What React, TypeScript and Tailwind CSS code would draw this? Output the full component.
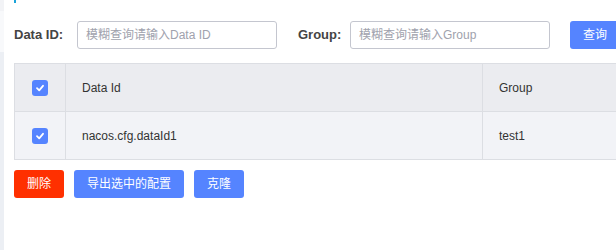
import React from "react";

const font = { fontFamily: '"Liberation Sans", Arial, "Noto Sans CJK SC", sans-serif' };

function Check() {
  return (
    <span className="inline-flex h-[16px] w-[16px] items-center justify-center rounded-[3px] bg-[#5584ff]">
      <svg width="10" height="10" viewBox="0 0 10 10" fill="none">
        <path d="M2 5.2 L4.2 7.3 L8 2.8" stroke="white" strokeWidth="1.8" strokeLinecap="round" strokeLinejoin="round" />
      </svg>
    </span>
  );
}

export default function App() {
  return (
    <div className="flex h-[250px] w-[616px] overflow-hidden bg-white" style={font}>
      <div className="flex w-[4px] shrink-0 flex-col">
        <div className="h-[11px] bg-[#f2f3f6]" />
        <div className="h-[41px] bg-[#f8f9fb]" />
        <div className="flex-1 bg-[#eceff4]" />
      </div>
      <div className="min-w-0 flex-1 overflow-hidden pl-[10px]">
        <div className="h-[3px] w-[2px] bg-[#1aa3d9]" />
        <div className="mt-[18px] flex h-[28px] items-center whitespace-nowrap">
          <span className="w-[63px] shrink-0 text-[13px] font-bold text-[#444]">Data ID:</span>
          <input
            className="h-[28px] w-[200px] shrink-0 rounded-[3px] border border-[#c4c6cf] px-[8px] text-[12px] text-[#333] outline-none placeholder:text-[#a0a2ad]"
            placeholder="模糊查询请输入Data ID"
          />
          <span className="ml-[21px] w-[52px] shrink-0 text-[13px] font-bold text-[#444]">Group:</span>
          <input
            className="h-[28px] w-[200px] shrink-0 rounded-[3px] border border-[#c4c6cf] px-[8px] text-[12px] text-[#333] outline-none placeholder:text-[#a0a2ad]"
            placeholder="模糊查询请输入Group"
          />
          <button className="ml-[20px] h-[28px] shrink-0 rounded-[3px] bg-[#5584ff] px-[13px] text-[12px] text-white">
            查询
          </button>
        </div>
        <table className="mt-[14px] w-[700px] table-fixed border-collapse text-[12px] text-[#333]">
          <colgroup>
            <col className="w-[51px]" />
            <col className="w-[417px]" />
            <col />
          </colgroup>
          <tbody>
            <tr className="h-[48px] bg-[#ebecf0]">
              <td className="border border-[#dcdee3] text-center align-middle">
                <div className="flex items-center justify-center"><Check /></div>
              </td>
              <td className="border border-[#dcdee3] pl-[16px]">Data Id</td>
              <td className="border border-[#dcdee3] pl-[16px]">Group</td>
            </tr>
            <tr className="h-[48px] bg-[#f2f3f7]">
              <td className="border border-[#dcdee3] text-center align-middle">
                <div className="flex items-center justify-center"><Check /></div>
              </td>
              <td className="border border-[#dcdee3] pl-[16px]">nacos.cfg.dataId1</td>
              <td className="border border-[#dcdee3] pl-[16px]">test1</td>
            </tr>
          </tbody>
        </table>
        <div className="mt-[10px] flex gap-[10px] whitespace-nowrap">
          <button className="h-[28px] w-[50px] rounded-[3px] bg-[#ff3000] text-[12px] text-white">删除</button>
          <button className="h-[28px] w-[110px] rounded-[3px] bg-[#5584ff] text-[12px] text-white">导出选中的配置</button>
          <button className="h-[28px] w-[50px] rounded-[3px] bg-[#5584ff] text-[12px] text-white">克隆</button>
        </div>
      </div>
    </div>
  );
}
